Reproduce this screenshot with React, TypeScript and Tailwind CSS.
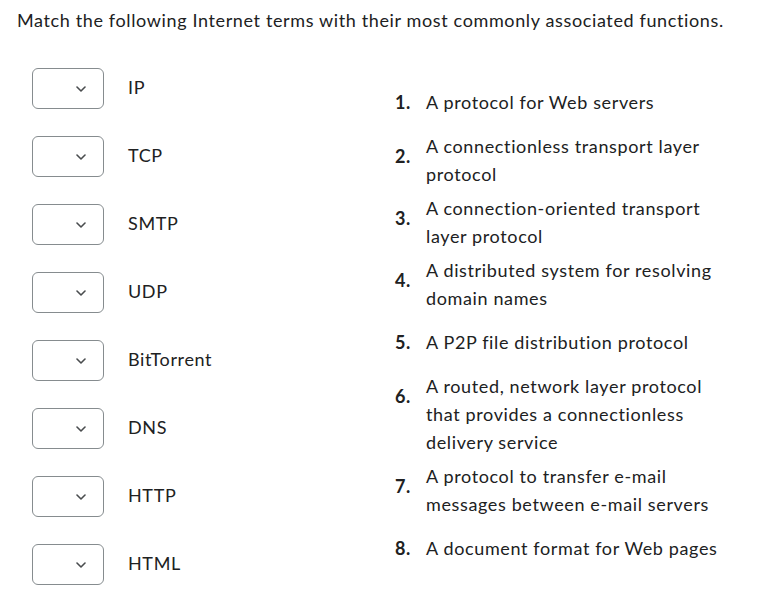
import React from 'react';

const terms = ['IP', 'TCP', 'SMTP', 'UDP', 'BitTorrent', 'DNS', 'HTTP', 'HTML'];

const functions: string[][] = [
  ['A protocol for Web servers'],
  ['A connectionless transport layer', 'protocol'],
  ['A connection-oriented transport', 'layer protocol'],
  ['A distributed system for resolving', 'domain names'],
  ['A P2P file distribution protocol'],
  ['A routed, network layer protocol', 'that provides a connectionless', 'delivery service'],
  ['A protocol to transfer e-mail', 'messages between e-mail servers'],
  ['A document format for Web pages'],
];

// Empty dropdown used to pick the matching number
function MatchSelect() {
  return (
    <div className="flex h-[41px] w-[72px] shrink-0 items-center justify-end rounded-md border border-[#868c8f] bg-white pr-[17px]">
      <svg width="10" height="6" viewBox="0 0 10 6" fill="none">
        <path d="M1 1l4 4 4-4" stroke="#494c4e" strokeWidth="1.6" strokeLinecap="round" strokeLinejoin="round" />
      </svg>
    </div>
  );
}

export default function App() {
  return (
    <div
      className="min-h-[609px] w-[776px] bg-white text-[18px] tracking-[0.63px] text-[#202122] [font-variant-ligatures:none]"
      style={{ fontFamily: 'Lato, "Open Sans", sans-serif' }}
    >
      <p className="pl-[17px] pt-[9px] leading-[22px]">
        Match the following Internet terms with their most commonly associated functions.
      </p>

      <div className="mt-[37px] flex">
        {/* terms with their selects */}
        <div className="flex w-[395px] shrink-0 flex-col gap-[27px] pl-[32px]">
          {terms.map((t) => (
            <div key={t} className="flex items-center gap-[24px]">
              <MatchSelect />
              <span className="-mt-[4px] leading-[28px]">{t}</span>
            </div>
          ))}
        </div>

        {/* numbered functions */}
        <ol className="mt-[10px] flex flex-col gap-[6px]">
          {functions.map((lines, i) => (
            <li key={i} className="flex">
              <span className="flex h-[48px] w-[31px] shrink-0 items-center font-bold">{i + 1}.</span>
              <span className="self-center leading-[28px]">
                {lines.map((l, j) => (
                  <span key={j} className="block whitespace-nowrap">{l}</span>
                ))}
              </span>
            </li>
          ))}
        </ol>
      </div>
    </div>
  );
}
